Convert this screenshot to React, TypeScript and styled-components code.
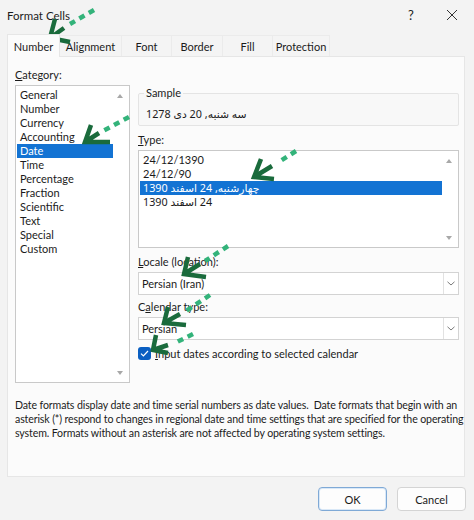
import React from "react";
import styled, { createGlobalStyle } from "styled-components";

const GlobalStyle = createGlobalStyle`
  html, body { margin: 0; padding: 0; background: #f3f3f3; }
  body { font-family: Lato, "Noto Sans", "DejaVu Sans", sans-serif; color: #1b1b1b; }
  * { box-sizing: border-box; }
`;

const Window = styled.div`
  position: relative;
  width: 474px;
  height: 520px;
  background: #f3f3f3;
  display: flex;
  flex-direction: column;
  overflow: hidden;
  font-size: 11px;
`;

const TitleBar = styled.div`
  height: 30px;
  display: flex;
  align-items: center;
  padding-left: 7px;
`;

const Title = styled.div`
  font-size: 11.5px;
  flex: 1;
`;

const HelpButton = styled.div`
  width: 20px;
  text-align: center;
  font-size: 13px;
  margin-right: 25px;
  color: #222;
`;

const CloseButton = styled.div`
  width: 12px;
  height: 12px;
  margin-right: 16px;
  display: flex;
`;

const TabStrip = styled.div`
  display: flex;
  align-items: flex-end;
  height: 23px;
  margin-top: 3px;
  padding-left: 7px;
`;

const Tab = styled.div<{ $w: number; $active?: boolean }>`
  width: ${(p) => p.$w}px;
  height: ${(p) => (p.$active ? 23 : 21)}px;
  display: flex;
  align-items: center;
  justify-content: center;
  background: ${(p) => (p.$active ? "#fbfbfb" : "#f4f4f4")};
  border: 1px solid ${(p) => (p.$active ? "#e6e6e6" : "#ebebeb")};
  border-bottom: none;
  border-left: ${(p) => (p.$active ? "1px solid #e6e6e6" : "none")};
  font-size: 11px;
  position: relative;
  z-index: ${(p) => (p.$active ? 1 : 0)};
  margin-bottom: ${(p) => (p.$active ? -1 : 0)}px;
`;

const Panel = styled.div`
  margin-left: 7px;
  width: 458px;
  height: 421px;
  background: #fbfbfb;
  border: 1px solid #e6e6e6;
  padding: 11px 5px 0 7px;
  display: flex;
  flex-direction: column;
`;

const Columns = styled.div`
  display: grid;
  grid-template-columns: 115px 321px;
  column-gap: 8px;
`;

const Column = styled.div`
  display: flex;
  flex-direction: column;
`;

const Label = styled.div<{ $mt?: number }>`
  line-height: 14px;
  height: 14px;
  margin-top: ${(p) => p.$mt ?? 0}px;
  margin-bottom: 3px;
  font-size: 11px;
  u { text-decoration: underline; text-underline-offset: 1px; }
`;

const ListBox = styled.div<{ $h: number }>`
  position: relative;
  height: ${(p) => p.$h}px;
  background: #ffffff;
  border: 1px solid #c9c9c9;
  padding: 2px 16px 0 1px;
`;

const ListItem = styled.div<{ $selected?: boolean }>`
  height: 14px;
  line-height: 14px;
  padding-left: 3px;
  font-size: 11px;
  white-space: nowrap;
  background: ${(p) => (p.$selected ? "#1373d3" : "transparent")};
  color: ${(p) => (p.$selected ? "#ffffff" : "#1b1b1b")};
`;

const ScrollArrow = styled.div<{ $down?: boolean }>`
  position: absolute;
  right: 6px;
  ${(p) => (p.$down ? "bottom: 7px;" : "top: 8px;")}
  width: 0;
  height: 0;
  border-left: 3px solid transparent;
  border-right: 3px solid transparent;
  ${(p) =>
    p.$down ? "border-top: 4px solid #a8a8a8;" : "border-bottom: 4px solid #a8a8a8;"}
`;

const SampleBox = styled.fieldset`
  margin: 18px 0 0 0;
  padding: 0 5px 4px 5px;
  border: 1px solid #e4e4e4;
  border-radius: 2px;
  background: #f8f8f8;
`;

const SampleLegend = styled.legend`
  padding: 0 2px;
  font-size: 11px;
  line-height: 14px;
`;

const SampleValue = styled.div`
  line-height: 14px;
  margin-top: 7px;
  padding-left: 2px;
  font-size: 11px;
`;

const Rtl = styled.span`
  font-family: "Noto Sans", "DejaVu Sans", sans-serif;
  font-size: 10.8px;
`;

const Select = styled.div`
  height: 23px;
  background: #ffffff;
  border: 1px solid #d3d3d3;
  display: flex;
  align-items: stretch;
`;

const SelectValue = styled.div`
  flex: 1;
  display: flex;
  align-items: center;
  padding-left: 3px;
  font-size: 11px;
`;

const SelectButton = styled.div`
  width: 15px;
  border-left: 1px solid #e2e2e2;
  display: flex;
  align-items: center;
  justify-content: center;
`;

const CheckRow = styled.div`
  display: flex;
  align-items: center;
  margin-top: 7px;
  height: 13px;
  gap: 4px;
  font-size: 11px;
  u { text-decoration: underline; text-underline-offset: 1px; }
`;

const CheckBox = styled.div`
  width: 13px;
  height: 13px;
  border-radius: 3px;
  background: #0a5fc2;
  display: flex;
  align-items: center;
  justify-content: center;
`;

const Description = styled.p`
  margin: 15px 0 0 0;
  line-height: 14px;
  font-size: 10.6px;
  letter-spacing: -0.13px;
  width: 452px;
`;

const Footer = styled.div`
  display: flex;
  justify-content: flex-end;
  gap: 10px;
  padding: 10px 8px 0 0;
`;

const Button = styled.button<{ $default?: boolean }>`
  width: 69px;
  height: 24px;
  border-radius: 4px;
  background: #fdfdfd;
  border: 1px solid ${(p) => (p.$default ? "#7fa9d6" : "#d4d4d4")};
  box-shadow: ${(p) => (p.$default ? "inset 0 0 0 1px #d9e8f7" : "none")};
  font-family: inherit;
  font-size: 11px;
  color: #1b1b1b;
  padding: 0;
`;

const Overlay = styled.svg`
  position: absolute;
  left: 0;
  top: 0;
  pointer-events: none;
`;

type Arrow = {
  dash: [number, number, number, number];
  tip: [number, number];
  neck: [number, number];
  a1: [number, number];
  a2: [number, number];
};

const arrows: Arrow[] = [
  { dash: [94, 10, 70, 24], neck: [64, 28], tip: [50, 38], a1: [55, 19], a2: [70, 42] },
  { dash: [129, 117, 103, 131], neck: [99, 133], tip: [85, 142], a1: [91, 125], a2: [110, 142] },
  { dash: [296, 151, 279, 162], neck: [272, 166], tip: [254, 177], a1: [261, 159], a2: [274, 179] },
  { dash: [228, 246, 205, 261], neck: [200, 264], tip: [184, 274], a1: [188, 257], a2: [206, 277] },
  { dash: [210, 295, 186, 311], neck: [180, 314], tip: [164, 323], a1: [168, 307], a2: [186, 325] },
  { dash: [193, 334, 175, 343], neck: [168, 345], tip: [153, 350], a1: [156, 335], a2: [168, 353] },
];

const Chevron = () => (
  <svg width="8" height="5" viewBox="0 0 8 5">
    <path d="M0.5 0.8 L4 4 L7.5 0.8" fill="none" stroke="#7a7a7a" strokeWidth="1" />
  </svg>
);

const categories = [
  "General",
  "Number",
  "Currency",
  "Accounting",
  "Date",
  "Time",
  "Percentage",
  "Fraction",
  "Scientific",
  "Text",
  "Special",
  "Custom",
];

const tabs: { label: string; w: number }[] = [
  { label: "Number", w: 53 },
  { label: "Alignment", w: 62 },
  { label: "Font", w: 50 },
  { label: "Border", w: 51 },
  { label: "Fill", w: 50 },
  { label: "Protection", w: 57 },
];

export default function App() {
  return (
    <>
      <GlobalStyle />
      <Window>
        <TitleBar>
          <Title>Format Cells</Title>
          <HelpButton>?</HelpButton>
          <CloseButton>
            <svg width="12" height="12" viewBox="0 0 12 12">
              <path d="M1 1 L11 11 M11 1 L1 11" stroke="#333" strokeWidth="1" />
            </svg>
          </CloseButton>
        </TitleBar>
        <TabStrip>
          {tabs.map((t, i) => (
            <Tab key={t.label} $w={t.w} $active={i === 0}>
              {t.label}
            </Tab>
          ))}
        </TabStrip>
        <Panel>
          <Columns>
            <Column>
              <Label>
                <u>C</u>ategory:
              </Label>
              <ListBox $h={298}>
                {categories.map((c) => (
                  <ListItem key={c} $selected={c === "Date"}>
                    {c}
                  </ListItem>
                ))}
                <ScrollArrow />
                <ScrollArrow $down />
              </ListBox>
            </Column>
            <Column>
              <SampleBox>
                <SampleLegend>Sample</SampleLegend>
                <SampleValue>
                  <Rtl dir="rtl">سه شنبه, 20 دی 1278</Rtl>
                </SampleValue>
              </SampleBox>
              <Label $mt={7}>
                <u>T</u>ype:
              </Label>
              <ListBox $h={98}>
                <ListItem>24/12/1390</ListItem>
                <ListItem>24/12/90</ListItem>
                <ListItem $selected>
                  <Rtl dir="rtl">چهارشنبه, 24 اسفند 1390</Rtl>
                </ListItem>
                <ListItem>
                  <Rtl dir="rtl">24 اسفند 1390</Rtl>
                </ListItem>
                <ScrollArrow />
                <ScrollArrow $down />
              </ListBox>
              <Label $mt={7}>
                <u>L</u>ocale (location):
              </Label>
              <Select>
                <SelectValue>Persian (Iran)</SelectValue>
                <SelectButton>
                  <Chevron />
                </SelectButton>
              </Select>
              <Label $mt={5}>
                C<u>a</u>lendar type:
              </Label>
              <Select>
                <SelectValue>Persian</SelectValue>
                <SelectButton>
                  <Chevron />
                </SelectButton>
              </Select>
              <CheckRow>
                <CheckBox>
                  <svg width="9" height="7" viewBox="0 0 9 7">
                    <path d="M1 3.6 L3.4 6 L8 1" fill="none" stroke="#fff" strokeWidth="1.2" />
                  </svg>
                </CheckBox>
                <span>
                  <u>I</u>nput dates according to selected calendar
                </span>
              </CheckRow>
            </Column>
          </Columns>
          <Description>
            Date formats display date and time serial numbers as date values.&nbsp; Date formats that begin with an
            asterisk (*) respond to changes in regional date and time settings that are specified for the operating
            system. Formats without an asterisk are not affected by operating system settings.
          </Description>
        </Panel>
        <Footer>
          <Button $default>OK</Button>
          <Button>Cancel</Button>
        </Footer>
        <Overlay width="474" height="520" viewBox="0 0 474 520">
          {arrows.map((a, i) => (
            <g key={i}>
              <line
                x1={a.dash[0]}
                y1={a.dash[1]}
                x2={a.dash[2]}
                y2={a.dash[3]}
                stroke="#33b37a"
                strokeWidth="4.5"
                strokeDasharray="6 5"
              />
              <path
                d={`M${a.neck[0]} ${a.neck[1]} L${a.tip[0]} ${a.tip[1]} M${a.a1[0]} ${a.a1[1]} L${a.tip[0]} ${a.tip[1]} L${a.a2[0]} ${a.a2[1]}`}
                fill="none"
                stroke="#1a6b3c"
                strokeWidth="4.5"
                strokeLinejoin="miter"
              />
            </g>
          ))}
        </Overlay>
      </Window>
    </>
  );
}
